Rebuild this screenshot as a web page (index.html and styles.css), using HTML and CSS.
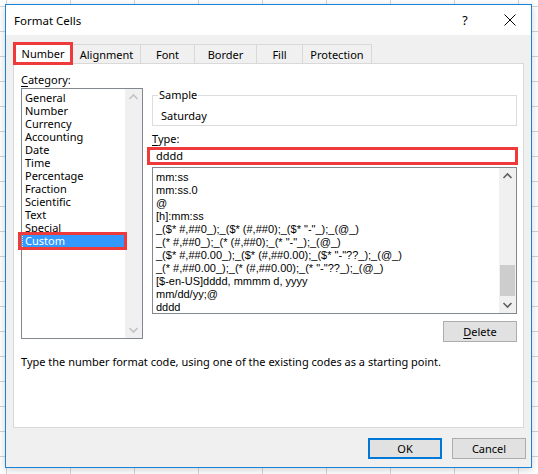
FILE: index.html
```html
<!DOCTYPE html>
<html>
<head>
<meta charset="utf-8">
<link rel="stylesheet" href="styles.css">
</head>
<body>
<div class="dialog">
  <div class="titlebar">
    <span class="title">Format Cells</span>
    <span class="help">?</span>
    <span class="close"><svg width="12" height="12" viewBox="0 0 12 12"><path d="M0.5 0.5 L11.5 11.5 M11.5 0.5 L0.5 11.5" stroke="#000" stroke-width="1" fill="none"/></svg></span>
  </div>
  <div class="body">
    <div class="tabs">
      <div class="tab active w-number">Number</div>
      <div class="tab w-align">Alignment</div>
      <div class="tab w-font">Font</div>
      <div class="tab w-border">Border</div>
      <div class="tab w-fill">Fill</div>
      <div class="tab w-prot">Protection</div>
    </div>
    <div class="panel">
      <div class="columns">
        <div class="left">
          <div class="label"><u>C</u>ategory:</div>
          <div class="listbox category">
            <ul class="items">
              <li>General</li>
              <li>Number</li>
              <li>Currency</li>
              <li>Accounting</li>
              <li>Date</li>
              <li>Time</li>
              <li>Percentage</li>
              <li>Fraction</li>
              <li>Scientific</li>
              <li>Text</li>
              <li>Special</li>
              <li class="selected">Custom</li>
            </ul>
            <div class="scrollbar disabled">
              <svg class="arrow" width="17" height="17" viewBox="0 0 17 17"><path d="M4.5 10 L8.5 6 L12.5 10" stroke="#c2c2c2" stroke-width="1.6" fill="none"/></svg>
              <div class="track"></div>
              <svg class="arrow" width="17" height="17" viewBox="0 0 17 17"><path d="M4.5 7 L8.5 11 L12.5 7" stroke="#c2c2c2" stroke-width="1.6" fill="none"/></svg>
            </div>
          </div>
        </div>
        <div class="right">
          <fieldset class="sample">
            <legend>Sample</legend>
            <div class="sample-value">Saturday</div>
          </fieldset>
          <div class="label"><u>T</u>ype:</div>
          <div class="type-input">dddd</div>
          <div class="listbox formats">
            <ul class="items mono">
              <li>mm:ss</li>
              <li>mm:ss.0</li>
              <li>@</li>
              <li>[h]:mm:ss</li>
              <li>_($* #,##0_);_($* (#,##0);_($* "-"_);_(@_)</li>
              <li>_(* #,##0_);_(* (#,##0);_(* "-"_);_(@_)</li>
              <li>_($* #,##0.00_);_($* (#,##0.00);_($* "-"??_);_(@_)</li>
              <li>_(* #,##0.00_);_(* (#,##0.00);_(* "-"??_);_(@_)</li>
              <li>[$-en-US]dddd, mmmm d, yyyy</li>
              <li>mm/dd/yy;@</li>
              <li>dddd</li>
            </ul>
            <div class="scrollbar">
              <svg class="arrow" width="17" height="17" viewBox="0 0 17 17"><path d="M4.5 10 L8.5 6 L12.5 10" stroke="#606060" stroke-width="1.6" fill="none"/></svg>
              <div class="track"><div class="thumb"></div></div>
              <svg class="arrow" width="17" height="17" viewBox="0 0 17 17"><path d="M4.5 7 L8.5 11 L12.5 7" stroke="#606060" stroke-width="1.6" fill="none"/></svg>
            </div>
          </div>
          <div class="actions"><button class="btn"><u>D</u>elete</button></div>
        </div>
      </div>
      <p class="hint">Type the number format code, using one of the existing codes as a starting point.</p>
    </div>
    <div class="footer">
      <button class="btn default">OK</button>
      <button class="btn">Cancel</button>
    </div>
  </div>
</div>
</body>
</html>
```

FILE: styles.css
```css
* { box-sizing: border-box; }
html, body { margin: 0; padding: 0; }
body {
  width: 538px;
  height: 474px;
  overflow: hidden;
  font-family: "Noto Sans", "Liberation Sans", sans-serif;
  font-size: 11px;
  color: #000;
  background-color: #fff;
  background-image:
    repeating-linear-gradient(to right, #d4d4d4 0 1px, transparent 1px 64px),
    repeating-linear-gradient(to bottom, #d4d4d4 0 1px, transparent 1px 25px);
  background-position: 6px 0, 0 6px;
}
.dialog {
  margin: 4px 0 0 5px;
  width: 527px;
  height: 464px;
  border: 1px solid #1883d7;
  background: #f0f0f0;
  display: flex;
  flex-direction: column;
  box-shadow: 0 2px 8px rgba(0,0,0,0.18);
}
.titlebar {
  height: 30px;
  background: #fff;
  display: flex;
  align-items: center;
  padding-left: 8px;
  flex: none;
}
.title { font-size: 11.5px; flex: 1; }
.help { font-size: 12.5px; width: 12px; margin-right: 33px; text-align: center; }
.close { width: 12px; height: 12px; margin-right: 15px; display: flex; }
.body {
  flex: 1;
  padding: 9px 5px 0 7px;
  display: flex;
  flex-direction: column;
}
.tabs { display: flex; height: 19px; flex: none; }
.tab {
  height: 19px;
  border: 1px solid #d9d9d9;
  border-bottom: none;
  margin-left: -1px;
  display: flex;
  align-items: center;
  justify-content: center;
  background: #f0f0f0;
  line-height: 1;
}
.tab.active {
  margin-left: 0;
  position: relative;
  top: -2px;
  height: 23px;
  background: #fff;
  border: 3px solid #ee3a3a;
  z-index: 2;
}
.w-number { width: 60px; }
.w-align { width: 69px; }
.w-font { width: 55px; }
.w-border { width: 63px; }
.w-fill { width: 47px; }
.w-prot { width: 70px; }
.panel {
  width: 511px;
  height: 365px;
  flex: none;
  background: #fff;
  border: 1px solid #d9d9d9;
  padding: 8px 0 0 7px;
}
.columns { display: flex; align-items: flex-start; }
.left { width: 122px; flex: none; }
.right { width: 365px; margin-left: 9px; padding-top: 16px; flex: none; }
.label { height: 16px; line-height: 16px; }
.label u, .btn u { text-decoration: underline; text-underline-offset: 2px; }
.listbox {
  border: 1px solid #828790;
  display: flex;
  background: #fff;
}
.category { height: 251px; }
.formats { height: 147px; margin-top: 2px; }
.items {
  list-style: none;
  margin: 0;
  padding: 2px 0 0 0;
  flex: 1;
  min-width: 0;
}
.items li {
  height: 13px;
  line-height: 13px;
  padding-left: 3px;
  white-space: nowrap;
}
.category .items li { position: relative; }
.category .items li.selected {
  background: #3399ff;
  color: #fff;
  border-left: 1px dotted #cfe6ff;
  padding-left: 2px;
}
.category .items li.selected::after {
  content: "";
  position: absolute;
  top: -2px;
  bottom: -3px;
  left: -5px;
  right: -2px;
  border: 3px solid #ee3a3a;
}
.formats .items { padding-top: 3px; }
.mono {
  font-family: "Liberation Sans", sans-serif;
  font-size: 11px;
}
.scrollbar {
  width: 17px;
  flex: none;
  background: #f0f0f0;
  display: flex;
  flex-direction: column;
}
.scrollbar .arrow { flex: none; display: block; }
.scrollbar .track { flex: 1; position: relative; }
.thumb {
  position: absolute;
  left: 1px;
  right: 1px;
  top: 80px;
  height: 31px;
  background: #cdcdcd;
}
.sample {
  margin: 0;
  border: 1px solid #dcdcdc;
  padding: 0 0 1px 5px;
}
.sample legend {
  padding: 0 1px;
  line-height: 14px;
  height: 14px;
}
.sample-value {
  margin-top: 6px;
  padding-left: 3px;
  line-height: 16px;
  height: 16px;
}
.right .label { margin-top: 5px; }
.type-input {
  margin: 0 -1px 0 -5px;
  height: 18px;
  border: 3px solid #ee3a3a;
  background: #fff;
  padding-left: 6px;
  line-height: 12px;
}
.actions { display: flex; justify-content: flex-end; margin-top: 7px; }
.btn {
  font-family: "Noto Sans", "Liberation Sans", sans-serif;
  font-size: 11px;
  color: #000;
  width: 74px;
  height: 21px;
  background: #e1e1e1;
  border: 1px solid #adadad;
  padding: 0;
  line-height: 1;
}
.btn.default { border: 2px solid #0078d7; }
.hint { margin: 12px 0 0 0; line-height: 16px; height: 16px; white-space: nowrap; }
.footer {
  display: flex;
  justify-content: flex-end;
  gap: 10px;
  margin-top: 10px;
}
```
